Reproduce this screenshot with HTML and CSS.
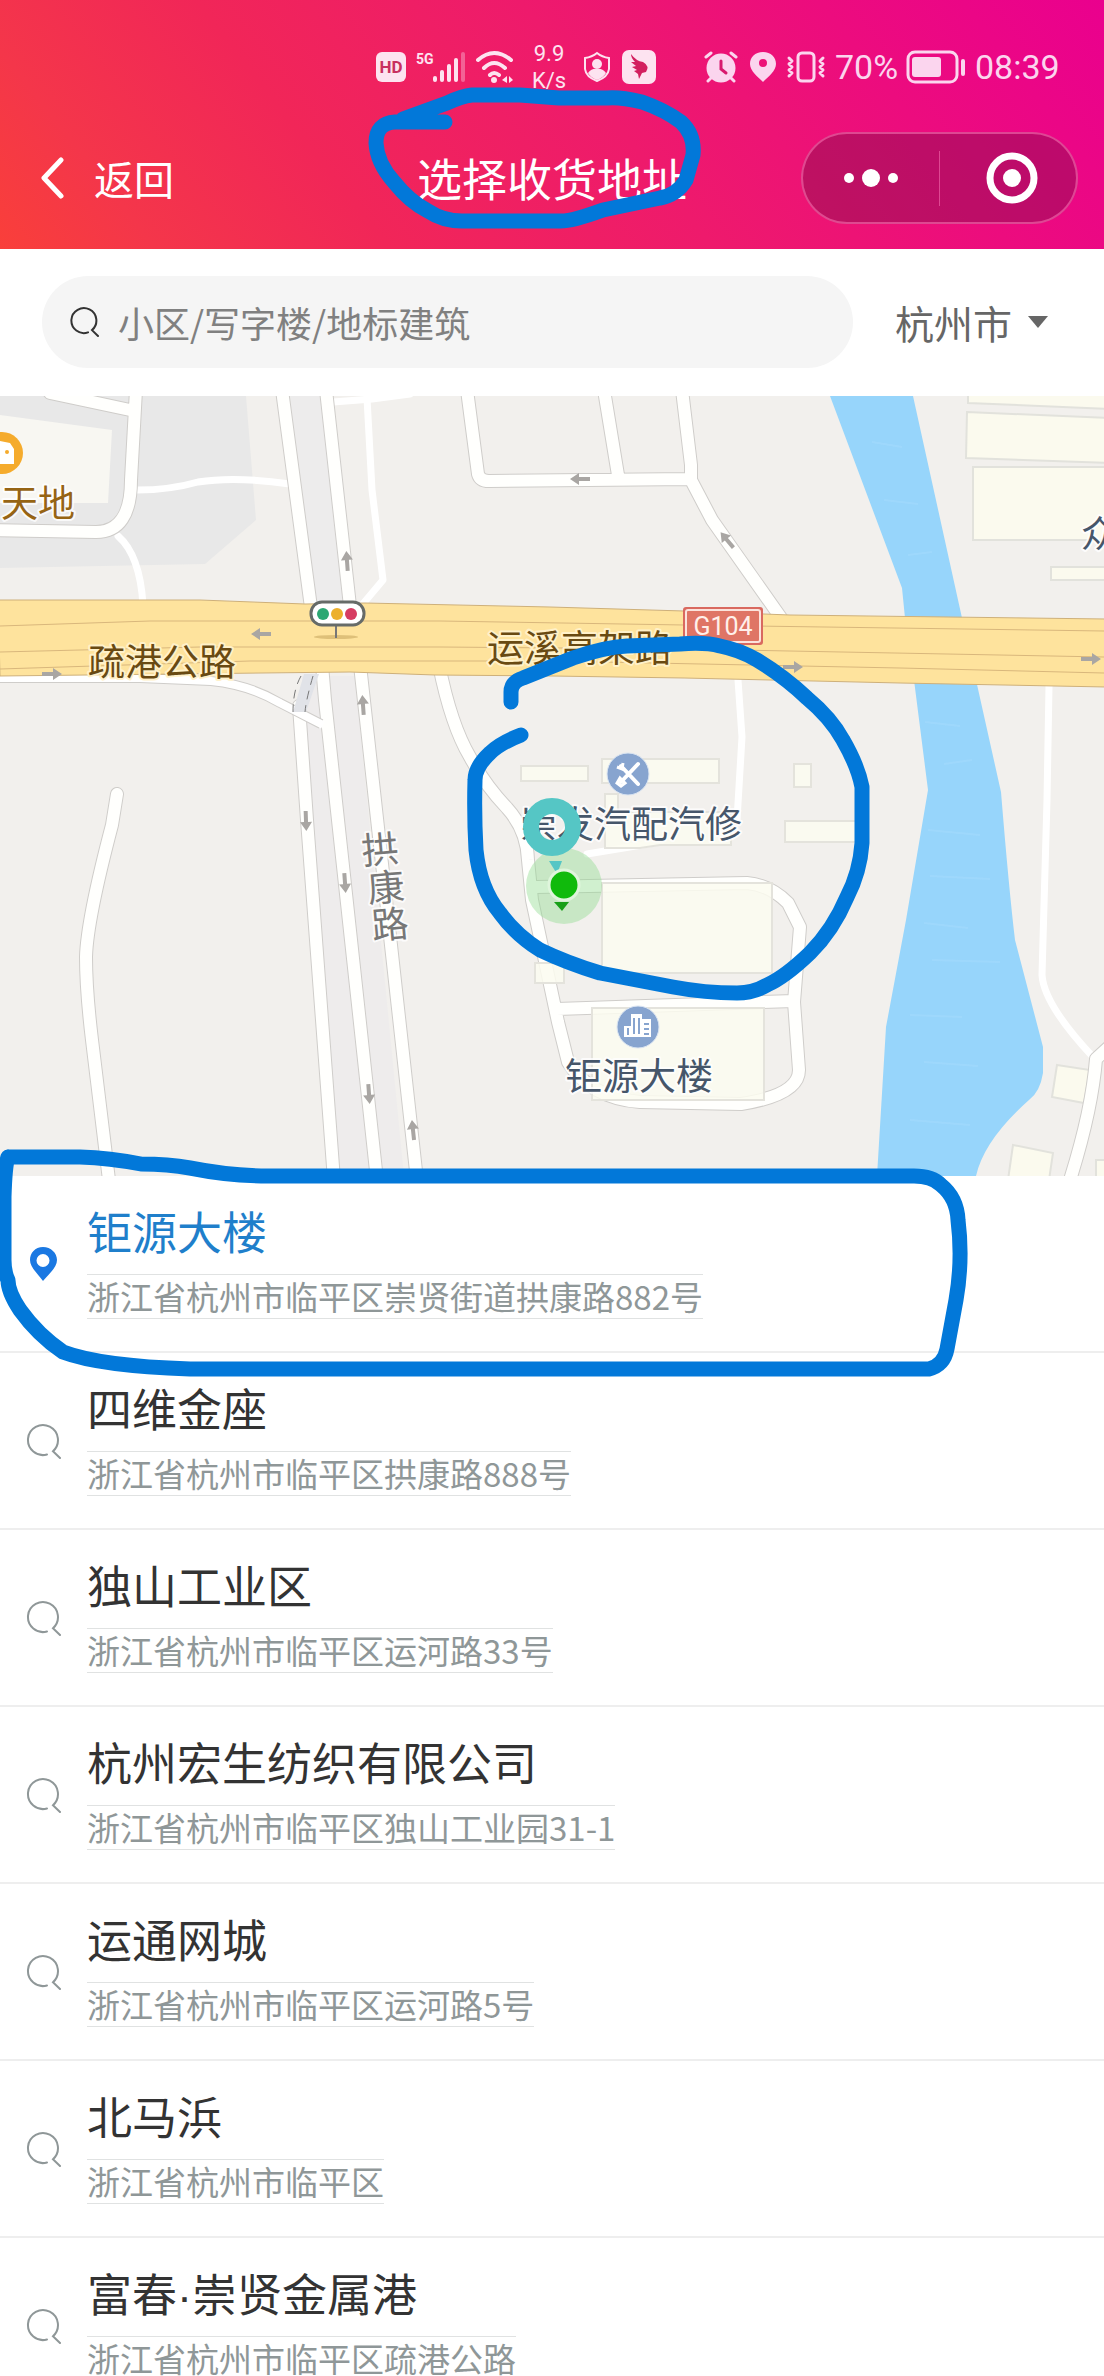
FILE: index.html
```html
<!DOCTYPE html>
<html lang="zh-CN">
<head>
<meta charset="utf-8">
<meta name="viewport" content="width=device-width, initial-scale=1">
<title>选择收货地址</title>
<link rel="stylesheet" href="styles.css">
</head>
<body>
<div class="app">
  <header class="header">
    <div class="status">
      <div class="status-group status-left">
        <span class="hd">HD</span>
        <span class="signal"><span class="net">5G</span>
          <svg width="36" height="32" viewBox="0 0 36 32" fill="currentColor"><rect x="3" y="25" width="4" height="6" rx="2"/><rect x="10" y="19" width="4" height="12" rx="2"/><rect x="17" y="13" width="4" height="18" rx="2"/><rect x="24" y="7" width="4" height="24" rx="2"/><rect x="31" y="1" width="4" height="30" rx="2" opacity=".35"/></svg>
        </span>
        <svg width="38" height="34" viewBox="0 0 38 34" fill="none" stroke="currentColor" stroke-width="4" stroke-linecap="round"><path d="M2 10Q18-4 35 10M8 18Q18 8 29 18M14 25Q18 21 23 25"/><circle cx="18" cy="30" r="1.5" fill="currentColor" stroke-width="3"/><path d="M26 30l5-4v7zM37 30l-4-4v7z" fill="currentColor" stroke="none"/></svg>
        <span class="speed">9.9<br>K/s</span>
        <svg width="26" height="32" viewBox="0 0 26 32"><path d="M13 2Q18 6 25 7V18Q24 26 13 30Q2 26 1 18V7Q8 6 13 2Z" fill="none" stroke="currentColor" stroke-width="2"/><circle cx="13" cy="13" r="5" fill="currentColor"/><path d="M4 22Q8 17 13 18Q18 17 22 22Q19 27 13 29Q7 27 4 22Z" fill="currentColor"/></svg>
        <svg width="36" height="34" viewBox="0 0 36 34"><rect x="2" width="34" height="34" rx="7" fill="currentColor"/><path d="M11 4Q16 11 23 12Q30 16 26 22L22 23L19 29L18 24L14 21L17 20L12 17L16 16L11 12L15 12Q11 8 11 4Z" fill="#d3205f"/></svg>
      </div>
      <div class="status-group status-right">
        <svg width="36" height="32" viewBox="0 0 36 32" stroke="currentColor" stroke-width="3" stroke-linecap="round"><circle cx="17" cy="17" r="13" fill="currentColor"/><path d="M2 6l5-4M27 2l5 4M7 27l-3 3M27 27l3 3" fill="none"/><path d="M17 10v8l5 4" fill="none" stroke="#d81a6e"/></svg>
        <svg width="28" height="32" viewBox="0 0 28 32"><path d="M14 1C6 1 1 6 1 13C1 20 9 26 14 31C19 26 27 20 27 13C27 6 22 1 14 1ZM14 8a4 4 0 1 1 0 8a4 4 0 0 1 0-8Z" fill="currentColor"/></svg>
        <svg width="40" height="32" viewBox="0 0 40 32" fill="none" stroke="currentColor" stroke-width="3" stroke-linecap="round" stroke-linejoin="round"><rect x="12" y="2" width="16" height="28" rx="4"/><path d="M3 7l3 3l-3 3l3 3l-3 3l3 3l-3 3M37 7l-3 3l3 3l-3 3l3 3l-3 3l3 3"/></svg>
        <span class="battery-text">70%</span>
        <svg width="60" height="34" viewBox="0 0 60 34"><rect x="2" y="2" width="49" height="30" rx="7" fill="none" stroke="currentColor" stroke-width="3"/><rect x="6" y="7" width="29" height="20" rx="3" fill="currentColor"/><rect x="55" y="9" width="4" height="17" rx="2" fill="currentColor"/></svg>
        <span class="clock">08:39</span>
      </div>
    </div>
    <nav class="nav">
      <button class="back" type="button">
        <svg width="24" height="42" viewBox="0 0 24 42" fill="none" stroke="currentColor" stroke-width="5" stroke-linecap="round" stroke-linejoin="round"><path d="M21 3L4 21L21 39"/></svg>
        返回
      </button>
      <h1 class="title">选择收货地址</h1>
      <div class="capsule">
        <button type="button" aria-label="更多"><svg width="54" height="20" viewBox="0 0 54 20" fill="currentColor"><circle cx="5" cy="10" r="5"/><circle cx="27" cy="10" r="9"/><circle cx="49" cy="10" r="5"/></svg></button>
        <span class="divider"></span>
        <button class="close" type="button" aria-label="关闭"><svg width="52" height="52" viewBox="0 0 52 52"><circle cx="26" cy="26" r="22" fill="none" stroke="currentColor" stroke-width="7"/><circle cx="26" cy="26" r="9" fill="currentColor"/></svg></button>
      </div>
    </nav>
  </header>

  <form class="search-row">
    <label class="search">
      <svg width="30" height="32" viewBox="0 0 30 32" fill="none" stroke="#333" stroke-width="2" stroke-linecap="round"><path d="M18 26.4A12.5 12.5 0 1 1 22 24.1L28 30"/></svg>
      <input type="text" aria-label="搜索地址" placeholder="小区/写字楼/地标建筑">
    </label>
    <label class="city">
      <select aria-label="城市"><option>杭州市</option></select>
      <svg width="20" height="12" viewBox="0 0 20 12" fill="#666"><path d="M0 0H20L10 12Z"/></svg>
    </label>
  </form>

  <svg class="map" viewBox="0 396 1104 780" role="img" aria-label="地图">
    <defs>
      <path id="arrow" d="M-10-2H1V-6L10 0L1 6V2H-10Z" fill="#a9a6a3"/>
      <g id="main-roads">
        <path d="M50 393L130 410M136 390L131 480Q131 532 96 532L-10 530"/>
        <path d="M282 390L312 615M326 390L351 615"/>
        <path d="M467 390L478 474Q480 481 489 481L691 479M604 390L618 475M682 390L691 465V480L712 520L786 625"/>
        <path d="M299 706L307 820L334 1180M322 665L325 700L377 1180M360 665L417 1180"/>
        <path d="M117 794L112 825Q87 920 86 957Q86 990 92 1040L109 1180"/>
        <path d="M439 665Q451 725 470 757Q485 785 507 808Q527 830 528 860L532 900L558 1022L568 1062Q590 1098 640 1102L741 1104Q799 1095 799 1070L794 1002L800 927L788 903Q770 885 747 883L536 887M557 1009L794 1001"/>
        <path d="M1110 1046L1096 1059Q1092 1110 1070 1180"/>
      </g>
    </defs>
    <rect y="396" width="1104" height="780" fill="#f2f0ed"/>
    <path d="M0 396H246L256 520L205 564L0 568Z" fill="#e8e8e8"/>
    <path d="M0 415L112 430L108 503H0Z" fill="#f8f7f2"/>
    <path d="M290 396H328L352 605H310Z" fill="#edecec"/>
    <path d="M302 676H355L404 1176H340Z" fill="#eeecec"/>
    <g fill="#97d5fb">
      <path d="M830 396H913L962 618H905L902 588Z"/>
      <path d="M914 680H976L1001 792Q1009 890 1015 940L1043 1047V1073Q1040 1092 1029 1100Q984 1140 976 1176H877L886 1027L906 920L928 790Z"/>
    </g>
    <g fill="none" stroke="#a4dafd" stroke-width="2" opacity=".6"><path d="M872 442l30 5M884 500l34 4M908 555l24-3M925 722l35 4M944 764l28-4M928 830l52 5M930 876l60 3M924 923l44 5M932 960l68 2M910 1015l52 2M924 1062l54 4M910 1120l60 5"/></g>
    <g fill="#fbfaee" stroke="#e2e2dc" stroke-width="2">
      <path d="M968 390V403L1110 409V390ZM967 412L1110 418V463L966 458ZM973 467H1110V540H973ZM1051 567H1110V580H1051Z"/>
      <path d="M1057 1065L1090 1070L1084 1103L1052 1097ZM1013 1145L1053 1153L1049 1180H1008ZM1096 1160H1110V1180H1096Z"/>
    </g>
    <g fill="none" stroke="#fff" stroke-width="7" stroke-linecap="round" stroke-linejoin="round">
      <path d="M137 490Q170 490 198 482Q235 476 290 484M118 536Q140 555 143 605M367 398L372 490L383 580L362 605"/>
      <path d="M738 680L742 737L737 820M587 854L660 842M1049 686L1047 800L1042 975Q1044 1005 1094 1058"/>
      <path d="M333 402L372 399L410 394"/>
    </g>
    <use href="#main-roads" fill="none" stroke="#cfcdca" stroke-width="14" stroke-linecap="round" stroke-linejoin="round"/>
    <use href="#main-roads" fill="none" stroke="#fffffd" stroke-width="12" stroke-linecap="round" stroke-linejoin="round"/>
    <path d="M0 678H140L211 681Q250 685 280 703L321 724" fill="none" stroke="#cfcdca" stroke-width="10"/>
    <path d="M0 678H140L211 681Q250 685 280 703L323 725" fill="none" stroke="#fff" stroke-width="8"/>
    <path d="M304 674H319L306 712H293Z" fill="#e1e3e8"/>
    <path d="M301 676Q293 690 293 712M313 676Q306 700 305 712" fill="none" stroke="#777" stroke-dasharray="9 6"/>
    <path d="M-2 600L200 600L305 604L365 603L550 607L684 611L790 615L1106 619V687L900 683L684 678L552 676L435 675L350 672L0 676Z" fill="#fee39d" stroke="#ceb07a" stroke-width="1"/>
    <path d="M0 626L150 621L440 621L684 625L1104 631M0 652L200 647L440 647L684 649L1104 657M0 669L250 661H552L900 668L1104 673" fill="none" stroke="#d9b77c" stroke-width="1"/>
    <g fill="#fcfbf0" fill-opacity=".85" stroke="#e4e3dc" stroke-width="2">
      <path d="M521 766H588V781H521ZM602 759H719V783H602ZM794 764H811V787H794ZM785 821H861V842H785ZM605 794H618V812H605ZM605 812H731V845H660L640 848H605ZM602 883H772V973H602ZM535 963H564V983H535ZM592 1008H764V1100H592Z"/>
    </g>
    <use href="#arrow" transform="translate(261 634) rotate(180)"/>
    <use href="#arrow" transform="translate(52 674)"/>
    <use href="#arrow" transform="translate(793 667)"/>
    <use href="#arrow" transform="translate(1091 659)"/>
    <use href="#arrow" transform="translate(580 479) rotate(180)"/>
    <use href="#arrow" transform="translate(727 540) rotate(-130)"/>
    <use href="#arrow" transform="translate(347 561) rotate(-94)"/>
    <use href="#arrow" transform="translate(363 705) rotate(-94)"/>
    <use href="#arrow" transform="translate(306 821) rotate(88)"/>
    <use href="#arrow" transform="translate(345 883) rotate(86)"/>
    <use href="#arrow" transform="translate(369 1094) rotate(86)"/>
    <use href="#arrow" transform="translate(413 1130) rotate(-96)"/>

    <ellipse cx="336" cy="637" rx="22" ry="2" fill="#c8a860" opacity=".6"/>
    <path d="M336 625V638" stroke="#777" stroke-width="2"/>
    <rect x="311" y="602" width="53" height="23" rx="11" fill="#fff" stroke="#666b68" stroke-width="3"/>
    <circle cx="323" cy="614" r="6" fill="#2ca873"/><circle cx="337" cy="614" r="6" fill="#ecb02c"/><circle cx="351" cy="614" r="6" fill="#d63c62"/>
    <rect x="683" y="607" width="80" height="38" rx="3" fill="#d9695f"/>
    <rect x="686" y="610" width="74" height="32" rx="2" fill="#df7565" stroke="#fbe3dc" stroke-width="2"/>
    <text class="shield-text" x="723" y="635">G104</text>

    <circle cx="2" cy="453" r="21" fill="#f5ab2c"/><path d="M-8 464V448L0 441L10 443L14 449V464Z" fill="#fff"/><circle cx="7" cy="452" r="2" fill="#f5ab2c"/>
    <circle cx="628" cy="774" r="21" fill="#87a4cf" stroke="#dbe5f2"/>
    <path d="M621 766L638 784M638 764L621 782" stroke="#fff" stroke-width="4" stroke-linecap="round"/><path d="M617 767l5 2l1-6M620 778l5 5l-4 3l-4-3z" fill="none" stroke="#fff" stroke-width="3"/>
    <circle cx="638" cy="1027" r="21" fill="#87a4cf" stroke="#dbe5f2"/>
    <path d="M624 1037V1026H631V1014H642V1019H651V1037Z" fill="#fff"/><path d="M628 1028v7M634 1018v16M639 1018v16M644 1024h5M644 1029h5M644 1034h5" stroke="#87a4cf" stroke-width="2"/>

    <text class="place cool" x="520" y="838">崇发汽配汽修</text>
    <text class="place cool" x="565" y="1090">钜源大楼</text>
    <text class="place cool" x="1081" y="548">众</text>
    <text class="place warm" x="88" y="676">疏港公路</text>
    <text class="place warm" x="487" y="662">运溪高架路</text>
    <text class="place gold" x="1" y="517">天地</text>
    <text class="place road" transform="translate(380 850) rotate(-5)" y="13">拱</text>
    <text class="place road" transform="translate(386 888) rotate(-5)" y="13">康</text>
    <text class="place road" transform="translate(390 925) rotate(-5)" y="13">路</text>

    <circle cx="564" cy="886" r="38" fill="#90dc90" opacity=".42"/>
    <circle cx="552" cy="827" r="21" fill="none" stroke="#55c6c5" stroke-width="16"/>
    <path d="M549 861H562L557 874Z" fill="#55c6c5"/>
    <circle cx="564" cy="885" r="15" fill="#10ba0c" stroke="#dff5dc" stroke-width="3"/>
    <path d="M554 902H569L562 911Z" fill="#18a018"/>
  </svg>

  <ul class="results">
    <li class="row current">
      <svg class="icon" width="27" height="34" viewBox="0 0 27 34"><path d="M13 0C5 0 0 6 0 13C0 20 7 26 13 34C20 26 27 20 27 13C27 6 21 0 13 0ZM13 7a6 6 0 1 1 0 13a6 6 0 0 1 0-13Z" fill="#1a78e2"/></svg>
      <div class="place-info"><h2>钜源大楼</h2><p>浙江省杭州市临平区崇贤街道拱康路882号</p></div>
    </li>
    <li class="row">
      <svg class="icon" width="36" height="36" viewBox="0 0 36 36"><use href="#lens"/></svg>
      <div class="place-info"><h2>四维金座</h2><p>浙江省杭州市临平区拱康路888号</p></div>
    </li>
    <li class="row">
      <svg class="icon" width="36" height="36" viewBox="0 0 36 36"><use href="#lens"/></svg>
      <div class="place-info"><h2>独山工业区</h2><p>浙江省杭州市临平区运河路33号</p></div>
    </li>
    <li class="row">
      <svg class="icon" width="36" height="36" viewBox="0 0 36 36"><use href="#lens"/></svg>
      <div class="place-info"><h2>杭州宏生纺织有限公司</h2><p>浙江省杭州市临平区独山工业园31-1</p></div>
    </li>
    <li class="row">
      <svg class="icon" width="36" height="36" viewBox="0 0 36 36"><use href="#lens"/></svg>
      <div class="place-info"><h2>运通网城</h2><p>浙江省杭州市临平区运河路5号</p></div>
    </li>
    <li class="row">
      <svg class="icon" width="36" height="36" viewBox="0 0 36 36"><use href="#lens"/></svg>
      <div class="place-info"><h2>北马浜</h2><p>浙江省杭州市临平区</p></div>
    </li>
    <li class="row">
      <svg class="icon" width="36" height="36" viewBox="0 0 36 36"><use href="#lens"/></svg>
      <div class="place-info"><h2>富春·崇贤金属港</h2><p>浙江省杭州市临平区疏港公路</p></div>
    </li>
  </ul>

  <svg class="marks" viewBox="0 0 1104 1400" fill="none" stroke="#0278d9" stroke-width="15" stroke-linecap="round" stroke-linejoin="round" aria-hidden="true">
    <defs><path id="lens" d="M21 31.5A15 15 0 1 1 27 28.2L34 35" fill="none" stroke="#8f9798" stroke-width="2" stroke-linecap="round"/></defs>
    <path d="M445 122H395Q376 123 376 143Q377 163 394 182Q410 202 428 211Q443 221 462 221H559Q570 222 603 210L660 198Q677 195 686 180L693 155Q695 135 681 122Q665 110 642 102Q620 97 608 98H559L520 95H472Q462 96 447 103L403 119"/>
    <path d="M511 702V692Q511 682 523 678L573 658Q605 647 627 646L680 644Q705 642 720 646Q740 650 757 660Q785 677 807 698Q831 718 843 740Q858 766 862 787V843Q860 872 847 897Q833 930 810 953Q785 977 767 985Q753 993 737 993Q705 993 673 987L600 973Q567 963 540 950Q516 935 500 913Q480 889 476 850Q474 815 475 780Q475 767 490 753Q500 743 521 735"/>
    <path d="M8 1157H80Q110 1158 141 1164Q168 1164 190 1168Q230 1176 268 1176H914Q932 1176 941 1185Q957 1198 958 1220Q963 1260 956 1300L947 1349Q944 1365 929 1369H190Q100 1366 63 1352Q38 1335 20 1310Q8 1292 8 1280Q4 1272 4 1260V1197Q5 1165 8 1157"/>
  </svg>
</div>
</body>
</html>
```
FILE: styles.css
```css
* { box-sizing: border-box; }

body {
  margin: 0;
  background: #fff;
  color: #333;
  font-family: "Noto Sans CJK SC", sans-serif;
}

button {
  border: 0;
  padding: 0;
  background: none;
  color: inherit;
  font: inherit;
}

svg { display: block; flex: none; }

.app {
  position: relative;
  display: flex;
  flex-direction: column;
  height: 100vh;
  overflow: hidden;
}

/* Header */
.header {
  flex: none;
  color: #fff;
  background: linear-gradient(52deg, #f93f3a 0%, #f4364a 12%, #f12658 30%, #ee1a6c 55%, #ec0c7e 78%, #ea008e 100%);
}

.status {
  display: flex;
  justify-content: flex-end;
  align-items: center;
  gap: 48px;
  height: 107px;
  padding: 27px 45px 0 0;
  color: #fde3f0;
  font-family: Roboto, "Noto Sans CJK SC", sans-serif;
}

.status-group { display: flex; align-items: center; }
.status-left { gap: 10px; }
.status-right { gap: 9px; color: #fbd5ee; }

.hd {
  width: 30px;
  border-radius: 6px;
  background: #fde3f0;
  color: #c83060;
  font-size: 17px;
  font-weight: 700;
  line-height: 30px;
  text-align: center;
}

.signal { display: flex; width: 50px; }
.net { width: 14px; font-size: 14px; font-weight: 700; line-height: 16px; }

.speed {
  width: 50px;
  font-size: 22px;
  line-height: 27px;
  text-align: center;
}

.battery-text { width: 62px; font-size: 34px; }
.clock { width: 84px; font-size: 34px; }

.nav {
  display: grid;
  grid-template-columns: 1fr auto 1fr;
  align-items: center;
  height: 142px;
  padding: 0 26px;
}

.back {
  display: flex;
  align-items: center;
  gap: 30px;
  justify-self: start;
  padding-left: 14px;
  font-size: 40px;
  line-height: 48px;
}

.title {
  margin: 0;
  font-size: 45px;
  font-weight: 400;
  line-height: 56px;
}

.capsule {
  display: grid;
  grid-template-columns: 1fr 1px 1fr;
  align-items: center;
  justify-self: end;
  width: 277px;
  height: 92px;
  border: 2px solid rgba(255, 130, 190, .5);
  border-radius: 46px;
  background: rgba(120, 15, 70, .4);
}

.capsule button {
  display: flex;
  justify-content: center;
}

.capsule .close { padding-left: 8px; }

.divider {
  height: 55px;
  background: rgba(255, 130, 190, .5);
}

/* Search */
.search-row {
  display: flex;
  flex: none;
  align-items: center;
  gap: 42px;
  padding: 27px 56px 28px 42px;
}

.search {
  display: flex;
  flex: 1;
  align-items: center;
  gap: 18px;
  height: 92px;
  padding: 0 28px;
  border-radius: 46px;
  background: #f5f5f5;
}

.search input {
  flex: 1;
  min-width: 0;
  padding: 0;
  border: 0;
  outline: 0;
  background: none;
  color: #333;
  font: 36px/48px "Noto Sans CJK SC", sans-serif;
}

.search input::placeholder { color: #808080; opacity: 1; }

.city {
  display: flex;
  align-items: center;
  gap: 16px;
}

.city select {
  width: 117px;
  padding: 0;
  border: 0;
  appearance: none;
  background: none;
  color: #666;
  font: 39px/56px "Noto Sans CJK SC", sans-serif;
}

/* Map */
.map { width: 100%; height: auto; }

.place {
  font-size: 37px;
  paint-order: stroke;
  stroke: rgba(255, 255, 255, .8);
  stroke-width: 4px;
  stroke-linejoin: round;
}

.cool { fill: #46566a; }
.warm { fill: #694a12; stroke: #fff1c9; }
.gold { fill: #966414; }
.road { fill: #777; text-anchor: middle; }

.shield-text {
  fill: #fff0ea;
  font: 25px Roboto, sans-serif;
  text-anchor: middle;
}

/* Results */
.results {
  flex: 1;
  min-height: 0;
  margin: 0;
  padding: 0;
  overflow-y: auto;
  scrollbar-width: none;
  list-style: none;
}

.row {
  display: grid;
  grid-template-columns: 87px 1fr;
  align-items: center;
  height: 177px;
  border-bottom: 2px solid #eee;
}

.icon { justify-self: center; }

.place-info { padding-bottom: 4px; }

.row h2 {
  margin: 0 0 8px;
  font-family: "Liberation Sans", "Noto Sans CJK SC", sans-serif;
  font-size: 45px;
  font-weight: 400;
  line-height: 62px;
}

.row p {
  width: fit-content;
  margin: 0;
  border: solid #e0e2e2;
  border-width: 1px 0;
  color: #8f9798;
  font-size: 33px;
  line-height: 43px;
}

.current h2 { color: #1f7fcb; }

/* Pen marks drawn over the page */
.marks {
  position: absolute;
  top: 0;
  left: 0;
  width: 100%;
  height: auto;
  pointer-events: none;
}
```
